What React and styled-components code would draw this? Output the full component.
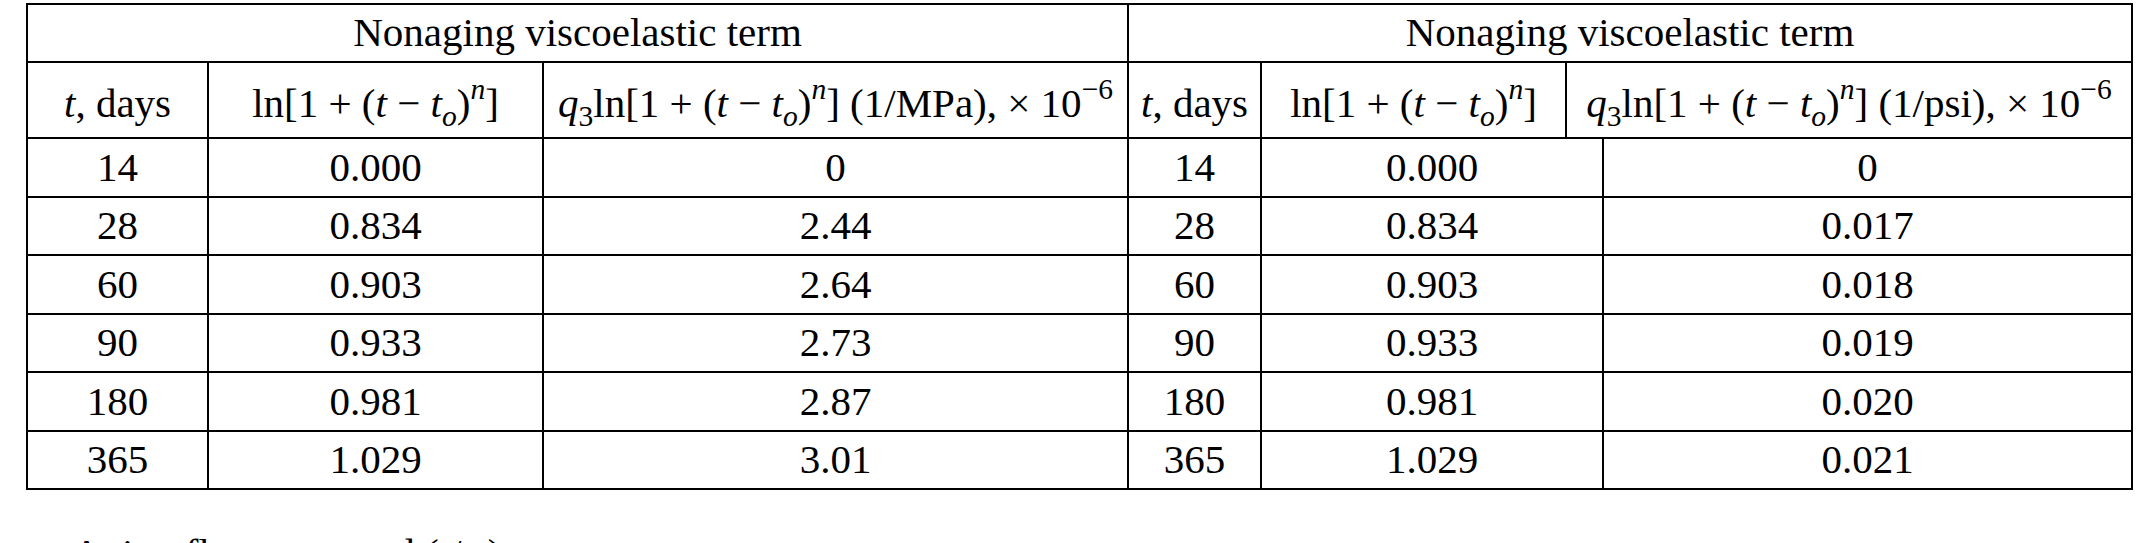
import React from "react";
import styled, { createGlobalStyle } from "styled-components";

const GlobalStyle = createGlobalStyle`
  html, body {
    margin: 0;
    padding: 0;
    background: #ffffff;
  }
  body {
    font-family: "Liberation Serif", "Times New Roman", serif;
    color: #000000;
    overflow: hidden;
  }
`;

const Page = styled.div`
  display: flex;
  flex-direction: column;
  align-items: flex-start;
  padding: 3px 0 0 26px;
  width: 2154px;
  height: 543px;
  box-sizing: border-box;
  overflow: hidden;
`;

const Frame = styled.div`
  display: flex;
  border-top: 2px solid #000;
  border-left: 2px solid #000;
`;

const Half = styled.div`
  display: flex;
  flex-direction: column;
  width: ${(p) => p.$width}px;
`;

const Row = styled.div`
  display: grid;
  grid-template-columns: ${(p) => p.$cols};
  height: ${(p) => p.$height}px;
`;

const Cell = styled.div`
  box-sizing: border-box;
  display: flex;
  align-items: center;
  justify-content: center;
  border-right: 2px solid #000;
  border-bottom: 2px solid #000;
  font-size: 41px;
  line-height: 1.15;
  overflow: hidden;
  padding-top: ${(p) => p.$pt || 0}px;
`;

const Title = styled(Cell)`
  height: 58px;
`;

const Label = styled.span`
  display: block;
  white-space: pre;
`;

const V = styled.i`
  font-style: italic;
`;

const Sub = styled.span`
  font-size: 0.72em;
  vertical-align: -0.3em;
  line-height: 0;
`;

const Sup = styled.span`
  font-size: 0.72em;
  vertical-align: 0.62em;
  line-height: 0;
`;

const Note = styled.div`
  margin: 40px 0 0 46px;
  font-size: 41px;
  line-height: 1.15;
  white-space: pre;
`;

const LnTerm = () => (
  <>
    {"ln[1 + ("}
    <V>t</V>
    {" − "}
    <V>t</V>
    <Sub>
      <V>o</V>
    </Sub>
    {")"}
    <Sup>
      <V>n</V>
    </Sup>
    {"]"}
  </>
);

const Q3Term = ({ unit }) => (
  <>
    <V>q</V>
    <Sub>3</Sub>
    <LnTerm />
    {` (1/${unit}), × 10`}
    <Sup>−6</Sup>
  </>
);

const rows = [
  { t: "14", ln: "0.000", mpa: "0", psi: "0" },
  { t: "28", ln: "0.834", mpa: "2.44", psi: "0.017" },
  { t: "60", ln: "0.903", mpa: "2.64", psi: "0.018" },
  { t: "90", ln: "0.933", mpa: "2.73", psi: "0.019" },
  { t: "180", ln: "0.981", mpa: "2.87", psi: "0.020" },
  { t: "365", ln: "1.029", mpa: "3.01", psi: "0.021" },
];

const LEFT_COLS = "181px 335px 585px";
const RIGHT_HEAD_COLS = "133px 305px 566px";
const RIGHT_BODY_COLS = "133px 342px 529px";
const HEAD_H = 76;
const ROW_H = 58.5;
const HEAD_PT = 8;

const TablePart = ({ width, headCols, bodyCols, unit, valueKey }) => (
  <Half $width={width}>
    <Title>
      <Label>Nonaging viscoelastic term</Label>
    </Title>
    <Row $cols={headCols} $height={HEAD_H}>
      <Cell $pt={HEAD_PT}>
        <Label>
          <V>t</V>
          {", days"}
        </Label>
      </Cell>
      <Cell $pt={HEAD_PT}>
        <Label>
          <LnTerm />
        </Label>
      </Cell>
      <Cell $pt={HEAD_PT}>
        <Label>
          <Q3Term unit={unit} />
        </Label>
      </Cell>
    </Row>
    {rows.map((r) => (
      <Row key={r.t} $cols={bodyCols} $height={ROW_H}>
        <Cell>
          <Label>{r.t}</Label>
        </Cell>
        <Cell>
          <Label>{r.ln}</Label>
        </Cell>
        <Cell>
          <Label>{r[valueKey]}</Label>
        </Cell>
      </Row>
    ))}
  </Half>
);

export default function App() {
  return (
    <>
      <GlobalStyle />
      <Page>
        <Frame>
          <TablePart
            width={1101}
            headCols={LEFT_COLS}
            bodyCols={LEFT_COLS}
            unit="MPa"
            valueKey="mpa"
          />
          <TablePart
            width={1004}
            headCols={RIGHT_HEAD_COLS}
            bodyCols={RIGHT_BODY_COLS}
            unit="psi"
            valueKey="psi"
          />
        </Frame>
        <Note>
          {"Aging flow term and ("}
          <V>t</V>
          {"/"}
          <V>t</V>
          <Sub>
            <V>o</V>
          </Sub>
          {")"}
        </Note>
      </Page>
    </>
  );
}
